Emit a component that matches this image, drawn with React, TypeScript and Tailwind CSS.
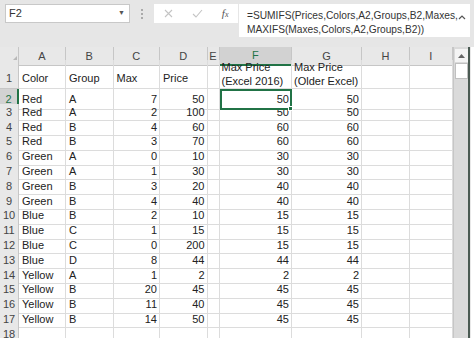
import React from "react";

const font = { fontFamily: '"Liberation Sans", Arial, sans-serif' };

const rows: [string, string, string, string, string, string][] = [
  ["Red", "A", "7", "50", "50", "50"],
  ["Red", "A", "2", "100", "50", "50"],
  ["Red", "B", "4", "60", "60", "60"],
  ["Red", "B", "3", "70", "60", "60"],
  ["Green", "A", "0", "10", "30", "30"],
  ["Green", "A", "1", "30", "30", "30"],
  ["Green", "B", "3", "20", "40", "40"],
  ["Green", "B", "4", "40", "40", "40"],
  ["Blue", "B", "2", "10", "15", "15"],
  ["Blue", "C", "1", "15", "15", "15"],
  ["Blue", "C", "0", "200", "15", "15"],
  ["Blue", "D", "8", "44", "44", "44"],
  ["Yellow", "A", "1", "2", "2", "2"],
  ["Yellow", "B", "20", "45", "45", "45"],
  ["Yellow", "B", "11", "40", "45", "45"],
  ["Yellow", "B", "14", "50", "45", "45"],
];

const gridCols = "grid grid-cols-[19px_47px_47.5px_46.5px_47.5px_12px_72.5px_70px_48px_42.5px]";
const cell = "border-r border-b border-[#dcdcdc] overflow-hidden whitespace-nowrap";
const head = "border-r border-b border-[#c6c6c6] bg-[#e8e8e8] text-[#444] flex items-center justify-center";

function FormulaBar() {
  return (
    <div className="flex h-[47px] bg-[#e6e6e6] pl-[5px] pt-[4px] pr-[8px]">
      <div className="flex h-[19px] w-[125px] items-center justify-between border border-[#c8c8c8] bg-white pl-[3px] pr-[4px] text-[11px] text-[#333]">
        <span>F2</span>
        <span className="text-[7px] text-[#555]">▼</span>
      </div>
      <div className="flex h-[19px] w-[24px] flex-col items-center justify-center gap-[2px]">
        <span className="h-[2px] w-[2px] bg-[#aaa]" />
        <span className="h-[2px] w-[2px] bg-[#aaa]" />
        <span className="h-[2px] w-[2px] bg-[#aaa]" />
      </div>
      <div className="flex h-[19px] w-[84px] items-center justify-around bg-white">
        <svg width="9" height="9" viewBox="0 0 9 9">
          <path d="M1 1 L8 8 M8 1 L1 8" stroke="#c4c4c4" strokeWidth="1.1" />
        </svg>
        <svg width="11" height="9" viewBox="0 0 11 9">
          <path d="M1 5 L4 8 L10 1" stroke="#c4c4c4" strokeWidth="1.1" fill="none" />
        </svg>
        <span className="text-[11px] italic text-[#555]" style={{ fontFamily: '"Liberation Serif", serif' }}>
          f<span className="text-[8px]">x</span>
        </span>
      </div>
      <div className="ml-[1px] flex h-[33px] flex-1 justify-between bg-white pl-[8px] pr-[4px] pt-[5px] text-[10.2px] leading-[14px] text-[#333]">
        <div className="whitespace-nowrap">
          <div>=SUMIFS(Prices,Colors,A2,Groups,B2,Maxes,</div>
          <div>MAXIFS(Maxes,Colors,A2,Groups,B2))</div>
        </div>
        <svg width="8" height="6" viewBox="0 0 8 6" className="mt-[5px]">
          <path d="M1 5 L4 2 L7 5" stroke="#555" strokeWidth="1.2" fill="none" />
        </svg>
      </div>
    </div>
  );
}

function Sheet() {
  return (
    <div className="w-[453px] text-[11px] text-[#222]">
      <div className={`${gridCols} h-[13px]`}>
        <div className={`${head} items-end justify-end pb-[1px] pr-[1px]`}>
          <svg width="8" height="8" viewBox="0 0 8 8">
            <path d="M8 0 L8 8 L0 8 Z" fill="#b8b8b8" />
          </svg>
        </div>
        {["A", "B", "C", "D", "E"].map((c) => (
          <div key={c} className={head}>
            {c}
          </div>
        ))}
        <div className="flex items-center justify-center border-r border-b-2 border-r-[#c6c6c6] border-b-[#217346] bg-[#d2d2d2] text-[#217346]">
          F
        </div>
        {["G", "H", "I"].map((c) => (
          <div key={c} className={head}>
            {c}
          </div>
        ))}
      </div>
      <div className={`${gridCols} h-[29px]`}>
        <div className={`${head} items-end pb-[2px]`}>1</div>
        <div className={`${cell} flex items-end pl-[3px] pb-[2px]`}>Color</div>
        <div className={`${cell} flex items-end pl-[3px] pb-[2px]`}>Group</div>
        <div className={`${cell} flex items-end pl-[3px] pb-[2px]`}>Max</div>
        <div className={`${cell} flex items-end pl-[3px] pb-[2px]`}>Price</div>
        <div className={cell} />
        <div className={`${cell} flex flex-col justify-end pl-[2px] leading-[14px]`}>
          <span>Max Price</span>
          <span>(Excel 2016)</span>
        </div>
        <div className={`${cell} flex flex-col justify-end pl-[2px] leading-[14px]`}>
          <span>Max Price</span>
          <span>(Older Excel)</span>
        </div>
        <div className={cell} />
        <div className={cell} />
      </div>
      {rows.map((r, i) => {
        const n = i + 2;
        const selected = n === 2;
        return (
          <div key={n} className={`${gridCols} h-[14.8px]`}>
            <div
              className={
                selected
                  ? "flex items-center justify-center border-r-2 border-b border-r-[#217346] border-b-[#c6c6c6] bg-[#d2d2d2] text-[#217346]"
                  : head
              }
            >
              {n}
            </div>
            <div className={`${cell} flex items-center pl-[3px]`}>{r[0]}</div>
            <div className={`${cell} flex items-center pl-[3px]`}>{r[1]}</div>
            <div className={`${cell} flex items-center justify-end pr-[2px]`}>{r[2]}</div>
            <div className={`${cell} flex items-center justify-end pr-[2px]`}>{r[3]}</div>
            <div className={cell} />
            {selected ? (
              <div className="relative flex items-center justify-end border-2 border-[#217346] pr-[1px]">
                {r[4]}
                <span className="absolute -right-[3px] -bottom-[3px] h-[5px] w-[5px] border border-white bg-[#217346]" />
              </div>
            ) : (
              <div className={`${cell} flex items-center justify-end pr-[2px]`}>{r[4]}</div>
            )}
            <div className={`${cell} flex items-center justify-end pr-[2px]`}>{r[5]}</div>
            <div className={cell} />
            <div className={cell} />
          </div>
        );
      })}
      <div className={`${gridCols} h-[14.8px]`}>
        <div className={`${head} items-start`}>18</div>
        {Array.from({ length: 9 }).map((_, k) => (
          <div key={k} className={cell} />
        ))}
      </div>
    </div>
  );
}

function ScrollBar() {
  return (
    <div className="flex w-[18px] border-l border-[#c6c6c6] bg-[#dadada]">
      <div className="flex w-[14px] flex-col items-center pt-[2px]">
        <div className="flex h-[13px] w-[13px] items-center justify-center bg-[#f4f4f4]">
          <svg width="7" height="4" viewBox="0 0 7 4">
            <path d="M0 4 L3.5 0 L7 4 Z" fill="#666" />
          </svg>
        </div>
        <div className="mt-[1px] h-[16px] w-[13px] border border-[#c0c0c0] bg-white" />
      </div>
      <div className="w-[2px] bg-[#4a5a52]" />
      <div className="flex-1 bg-[#e8e8e8]" />
    </div>
  );
}

export default function App() {
  return (
    <div className="flex h-[338px] w-[474px] overflow-hidden bg-white" style={font}>
      <div className="w-[3px] bg-[#34433b]" />
      <div className="flex flex-1 flex-col">
        <FormulaBar />
        <div className="flex flex-1 overflow-hidden">
          <Sheet />
          <ScrollBar />
        </div>
      </div>
    </div>
  );
}
